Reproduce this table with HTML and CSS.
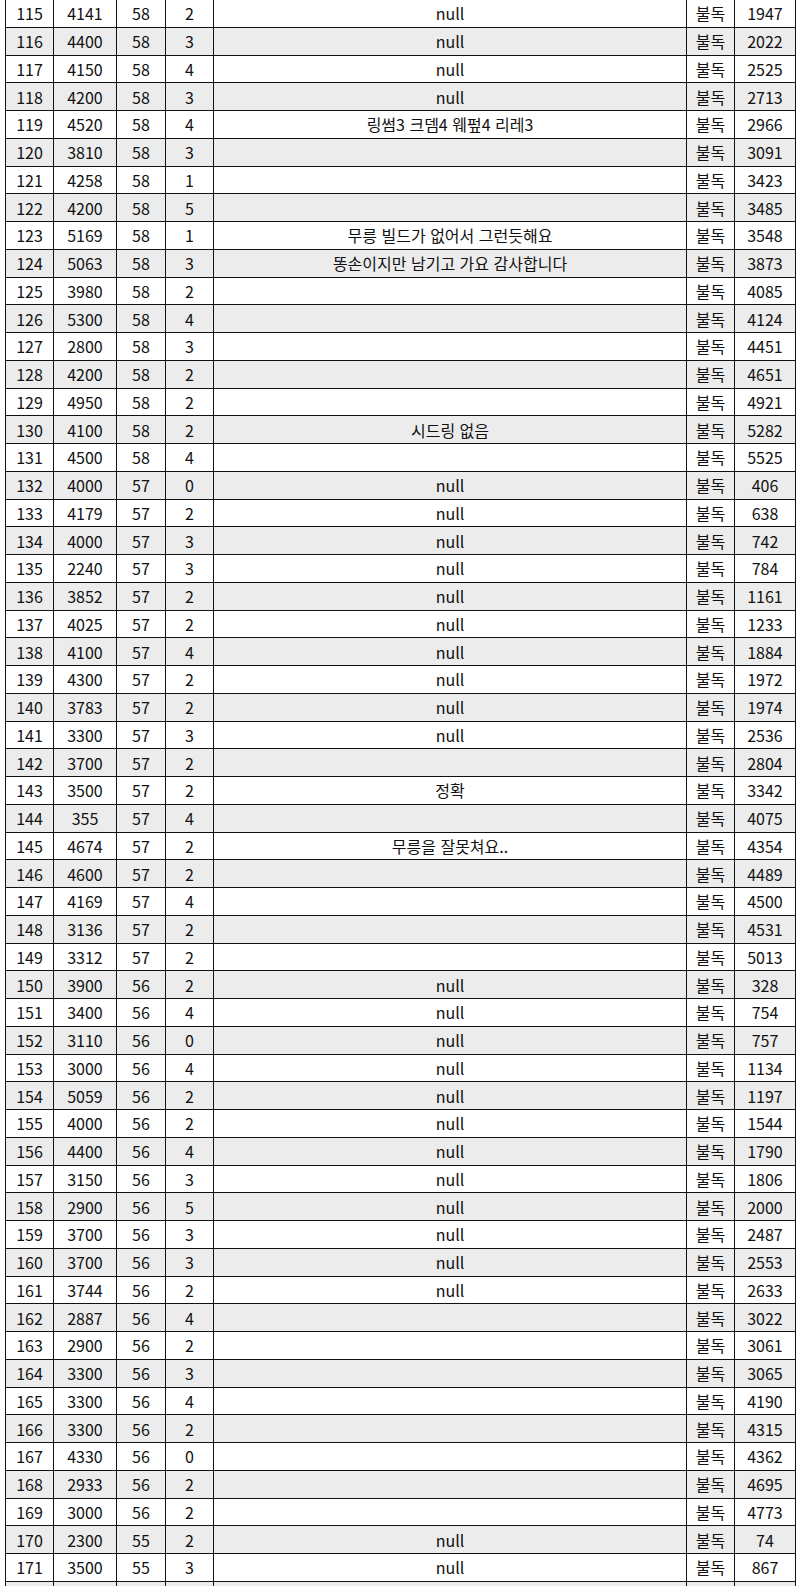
FILE: index.html
```html
<!DOCTYPE html>
<html lang="ko">
<head>
<meta charset="utf-8">
<title>table</title>
<link rel="stylesheet" href="styles.css">
</head>
<body>
<table class="grid">
<colgroup>
<col class="c1"><col class="c2"><col class="c3"><col class="c4"><col class="c5"><col class="c6"><col class="c7">
</colgroup>
<tbody>
<tr><td>115</td><td>4141</td><td>58</td><td>2</td><td>null</td><td>불독</td><td>1947</td></tr>
<tr><td>116</td><td>4400</td><td>58</td><td>3</td><td>null</td><td>불독</td><td>2022</td></tr>
<tr><td>117</td><td>4150</td><td>58</td><td>4</td><td>null</td><td>불독</td><td>2525</td></tr>
<tr><td>118</td><td>4200</td><td>58</td><td>3</td><td>null</td><td>불독</td><td>2713</td></tr>
<tr><td>119</td><td>4520</td><td>58</td><td>4</td><td>링썸3 크뎀4 웨펖4 리레3</td><td>불독</td><td>2966</td></tr>
<tr><td>120</td><td>3810</td><td>58</td><td>3</td><td></td><td>불독</td><td>3091</td></tr>
<tr><td>121</td><td>4258</td><td>58</td><td>1</td><td></td><td>불독</td><td>3423</td></tr>
<tr><td>122</td><td>4200</td><td>58</td><td>5</td><td></td><td>불독</td><td>3485</td></tr>
<tr><td>123</td><td>5169</td><td>58</td><td>1</td><td>무릉 빌드가 없어서 그런듯해요</td><td>불독</td><td>3548</td></tr>
<tr><td>124</td><td>5063</td><td>58</td><td>3</td><td>똥손이지만 남기고 가요 감사합니다</td><td>불독</td><td>3873</td></tr>
<tr><td>125</td><td>3980</td><td>58</td><td>2</td><td></td><td>불독</td><td>4085</td></tr>
<tr><td>126</td><td>5300</td><td>58</td><td>4</td><td></td><td>불독</td><td>4124</td></tr>
<tr><td>127</td><td>2800</td><td>58</td><td>3</td><td></td><td>불독</td><td>4451</td></tr>
<tr><td>128</td><td>4200</td><td>58</td><td>2</td><td></td><td>불독</td><td>4651</td></tr>
<tr><td>129</td><td>4950</td><td>58</td><td>2</td><td></td><td>불독</td><td>4921</td></tr>
<tr><td>130</td><td>4100</td><td>58</td><td>2</td><td>시드링 없음</td><td>불독</td><td>5282</td></tr>
<tr><td>131</td><td>4500</td><td>58</td><td>4</td><td></td><td>불독</td><td>5525</td></tr>
<tr><td>132</td><td>4000</td><td>57</td><td>0</td><td>null</td><td>불독</td><td>406</td></tr>
<tr><td>133</td><td>4179</td><td>57</td><td>2</td><td>null</td><td>불독</td><td>638</td></tr>
<tr><td>134</td><td>4000</td><td>57</td><td>3</td><td>null</td><td>불독</td><td>742</td></tr>
<tr><td>135</td><td>2240</td><td>57</td><td>3</td><td>null</td><td>불독</td><td>784</td></tr>
<tr><td>136</td><td>3852</td><td>57</td><td>2</td><td>null</td><td>불독</td><td>1161</td></tr>
<tr><td>137</td><td>4025</td><td>57</td><td>2</td><td>null</td><td>불독</td><td>1233</td></tr>
<tr><td>138</td><td>4100</td><td>57</td><td>4</td><td>null</td><td>불독</td><td>1884</td></tr>
<tr><td>139</td><td>4300</td><td>57</td><td>2</td><td>null</td><td>불독</td><td>1972</td></tr>
<tr><td>140</td><td>3783</td><td>57</td><td>2</td><td>null</td><td>불독</td><td>1974</td></tr>
<tr><td>141</td><td>3300</td><td>57</td><td>3</td><td>null</td><td>불독</td><td>2536</td></tr>
<tr><td>142</td><td>3700</td><td>57</td><td>2</td><td></td><td>불독</td><td>2804</td></tr>
<tr><td>143</td><td>3500</td><td>57</td><td>2</td><td>정확</td><td>불독</td><td>3342</td></tr>
<tr><td>144</td><td>355</td><td>57</td><td>4</td><td></td><td>불독</td><td>4075</td></tr>
<tr><td>145</td><td>4674</td><td>57</td><td>2</td><td>무릉을 잘못쳐요..</td><td>불독</td><td>4354</td></tr>
<tr><td>146</td><td>4600</td><td>57</td><td>2</td><td></td><td>불독</td><td>4489</td></tr>
<tr><td>147</td><td>4169</td><td>57</td><td>4</td><td></td><td>불독</td><td>4500</td></tr>
<tr><td>148</td><td>3136</td><td>57</td><td>2</td><td></td><td>불독</td><td>4531</td></tr>
<tr><td>149</td><td>3312</td><td>57</td><td>2</td><td></td><td>불독</td><td>5013</td></tr>
<tr><td>150</td><td>3900</td><td>56</td><td>2</td><td>null</td><td>불독</td><td>328</td></tr>
<tr><td>151</td><td>3400</td><td>56</td><td>4</td><td>null</td><td>불독</td><td>754</td></tr>
<tr><td>152</td><td>3110</td><td>56</td><td>0</td><td>null</td><td>불독</td><td>757</td></tr>
<tr><td>153</td><td>3000</td><td>56</td><td>4</td><td>null</td><td>불독</td><td>1134</td></tr>
<tr><td>154</td><td>5059</td><td>56</td><td>2</td><td>null</td><td>불독</td><td>1197</td></tr>
<tr><td>155</td><td>4000</td><td>56</td><td>2</td><td>null</td><td>불독</td><td>1544</td></tr>
<tr><td>156</td><td>4400</td><td>56</td><td>4</td><td>null</td><td>불독</td><td>1790</td></tr>
<tr><td>157</td><td>3150</td><td>56</td><td>3</td><td>null</td><td>불독</td><td>1806</td></tr>
<tr><td>158</td><td>2900</td><td>56</td><td>5</td><td>null</td><td>불독</td><td>2000</td></tr>
<tr><td>159</td><td>3700</td><td>56</td><td>3</td><td>null</td><td>불독</td><td>2487</td></tr>
<tr><td>160</td><td>3700</td><td>56</td><td>3</td><td>null</td><td>불독</td><td>2553</td></tr>
<tr><td>161</td><td>3744</td><td>56</td><td>2</td><td>null</td><td>불독</td><td>2633</td></tr>
<tr><td>162</td><td>2887</td><td>56</td><td>4</td><td></td><td>불독</td><td>3022</td></tr>
<tr><td>163</td><td>2900</td><td>56</td><td>2</td><td></td><td>불독</td><td>3061</td></tr>
<tr><td>164</td><td>3300</td><td>56</td><td>3</td><td></td><td>불독</td><td>3065</td></tr>
<tr><td>165</td><td>3300</td><td>56</td><td>4</td><td></td><td>불독</td><td>4190</td></tr>
<tr><td>166</td><td>3300</td><td>56</td><td>2</td><td></td><td>불독</td><td>4315</td></tr>
<tr><td>167</td><td>4330</td><td>56</td><td>0</td><td></td><td>불독</td><td>4362</td></tr>
<tr><td>168</td><td>2933</td><td>56</td><td>2</td><td></td><td>불독</td><td>4695</td></tr>
<tr><td>169</td><td>3000</td><td>56</td><td>2</td><td></td><td>불독</td><td>4773</td></tr>
<tr><td>170</td><td>2300</td><td>55</td><td>2</td><td>null</td><td>불독</td><td>74</td></tr>
<tr><td>171</td><td>3500</td><td>55</td><td>3</td><td>null</td><td>불독</td><td>867</td></tr>
<tr><td></td><td></td><td></td><td></td><td></td><td></td><td></td></tr>
</tbody>
</table>
</body>
</html>
```
FILE: styles.css
```css
html, body {
  margin: 0;
  padding: 0;
  background: #ffffff;
}

body {
  font-family: "Noto Sans CJK KR", "Noto Sans", sans-serif;
  font-size: 16px;
  color: #111111;
  overflow: hidden;
}

.grid {
  border-collapse: collapse;
  table-layout: fixed;
  width: 790px;
  margin: -1px 0 0 5px;
}

.c1 { width: 48px; }
.c2 { width: 63px; }
.c3 { width: 49px; }
.c4 { width: 48px; }
.c5 { width: 473px; }
.c6 { width: 48px; }
.c7 { width: 61px; }

.grid tr {
  height: 27.75px;
}

.grid tr:nth-child(even) {
  background: #ececec;
}

.grid td {
  border: 1px solid #111111;
  padding: 0;
  text-align: center;
  vertical-align: middle;
  line-height: 20px;
  white-space: nowrap;
  overflow: hidden;
}
```
